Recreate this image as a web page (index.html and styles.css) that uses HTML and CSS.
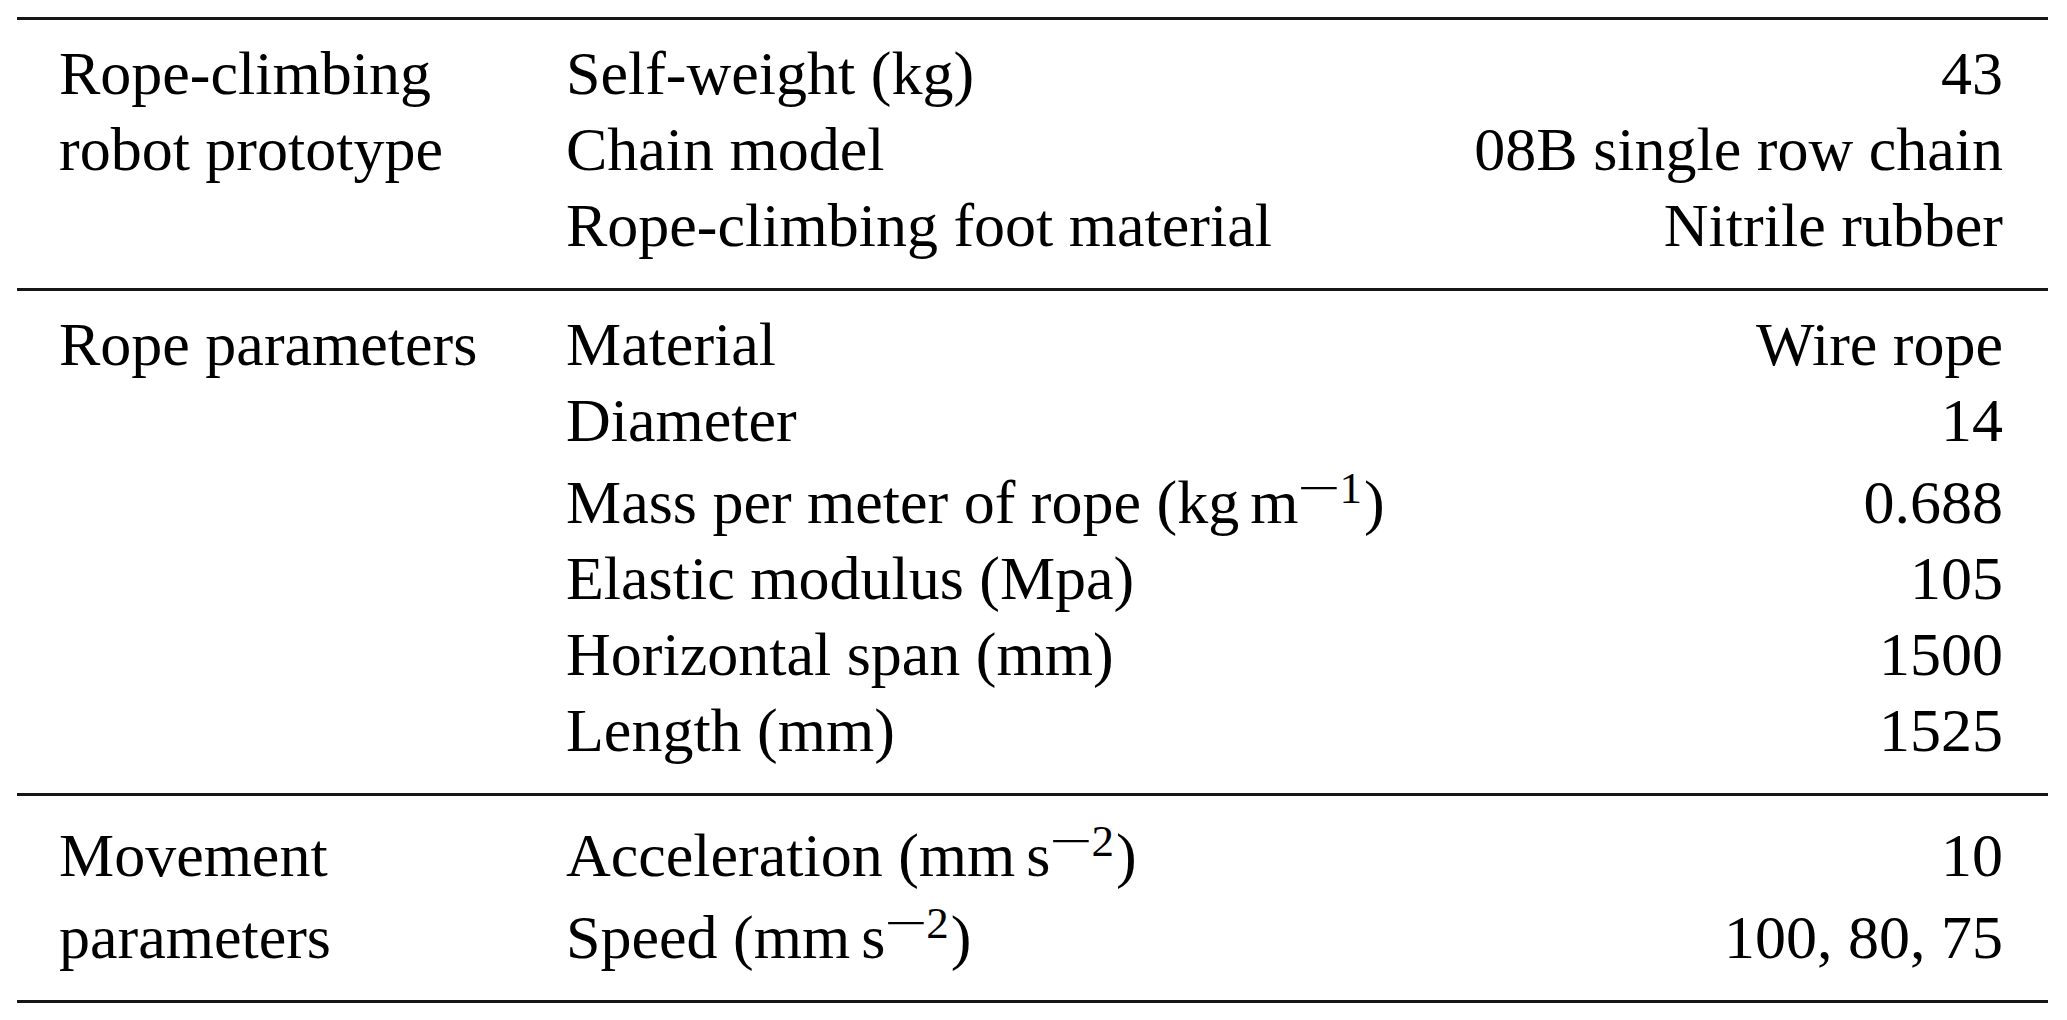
FILE: index.html
```html
<!DOCTYPE html>
<html lang="en">
<head>
<meta charset="utf-8">
<title>Rope-climbing robot parameters</title>
<link rel="stylesheet" href="styles.css">
</head>
<body>
<div class="table">
  <div class="group">
    <div class="row"><span class="label">Rope-climbing</span><span class="param">Self-weight (kg)</span><span class="value">43</span></div>
    <div class="row"><span class="label">robot prototype</span><span class="param">Chain model</span><span class="value">08B single row chain</span></div>
    <div class="row"><span class="label"></span><span class="param">Rope-climbing foot material</span><span class="value">Nitrile rubber</span></div>
  </div>
  <div class="group">
    <div class="row"><span class="label">Rope parameters</span><span class="param">Material</span><span class="value">Wire rope</span></div>
    <div class="row"><span class="label"></span><span class="param">Diameter</span><span class="value">14</span></div>
    <div class="row tall"><span class="label"></span><span class="param">Mass per meter of rope (kg<span class="thin"></span>m<sup><span class="minus">&minus;</span>1</sup>)</span><span class="value">0.688</span></div>
    <div class="row"><span class="label"></span><span class="param">Elastic modulus (Mpa)</span><span class="value">105</span></div>
    <div class="row"><span class="label"></span><span class="param">Horizontal span (mm)</span><span class="value">1500</span></div>
    <div class="row"><span class="label"></span><span class="param">Length (mm)</span><span class="value">1525</span></div>
  </div>
  <div class="group last">
    <div class="row tall"><span class="label">Movement</span><span class="param">Acceleration (mm<span class="thin"></span>s<sup><span class="minus">&minus;</span>2</sup>)</span><span class="value">10</span></div>
    <div class="row tall"><span class="label">parameters</span><span class="param">Speed (mm<span class="thin"></span>s<sup><span class="minus">&minus;</span>2</sup>)</span><span class="value">100, 80, 75</span></div>
  </div>
</div>
</body>
</html>
```

FILE: styles.css
```css
html, body {
  margin: 0;
  padding: 0;
  background: #ffffff;
}

body {
  font-family: "Liberation Serif", "Times New Roman", serif;
  font-size: 62px;
  color: #000000;
}

.table {
  width: 2031px;
  margin: 17px 0 0 17px;
}

.group {
  border-top: 3px solid #161616;
  padding: 15px 0 25px;
}

.group.last {
  border-bottom: 3px solid #161616;
}

.row {
  display: grid;
  grid-template-columns: 507px 1fr auto;
  padding: 0 45px 0 42px;
  height: 76px;
  line-height: 76px;
  white-space: nowrap;
}

.row.tall {
  padding-top: 6px;
}

.value {
  text-align: right;
}

.thin {
  display: inline-block;
  width: 11px;
}

sup {
  font-size: 45px;
  line-height: 0;
  vertical-align: 20px;
  margin-left: 1px;
  margin-right: 2px;
}

.minus {
  display: inline-block;
  width: 40px;
  text-align: center;
  transform: scaleX(1.7);
}
```
